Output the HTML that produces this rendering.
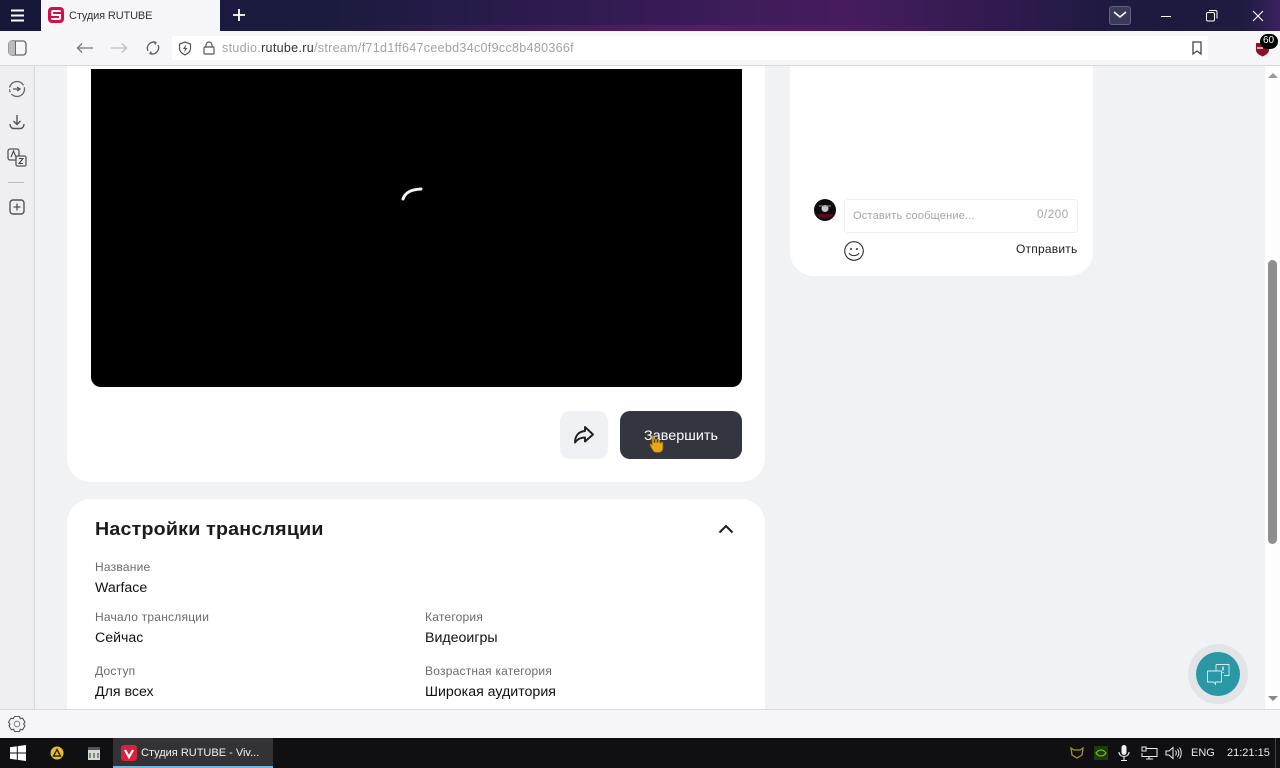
<!DOCTYPE html>
<html lang="ru"><head><meta charset="utf-8"><title>Студия RUTUBE</title>
<style>
html,body{margin:0;padding:0;width:1280px;height:768px;overflow:hidden;background:#f1f2f4;font-family:"Liberation Sans","DejaVu Sans",sans-serif;color:#111}
.a{position:absolute}
.t{position:absolute;white-space:nowrap;line-height:1}
svg{position:absolute;overflow:visible}
.lb{font-size:12px;color:#6a6a6a;letter-spacing:.22px}
.v{font-size:13.5px;color:#111;transform:scaleX(1.05);transform-origin:left center}
</style></head><body>
<div class="a" style="left:0;top:0;width:1280px;height:31px;background:linear-gradient(90deg,#16183a 0%,#1a1b3e 25%,#351b55 50%,#461c5e 66%,#311a50 78%,#1c1a3e 88%,#1e1a40 97%,#3a2260 100%)"></div>
<div class="a" style="left:320px;top:25px;width:640px;height:6px;background:linear-gradient(90deg,rgba(70,30,110,0),rgba(110,30,110,.55) 60%,rgba(70,30,110,0))"></div>
<svg style="left:0;top:0" width="40" height="31"><path d="M11 10.500h13M11 15.500h13M11 20.500h13" stroke="#fff" stroke-width="2"/></svg>
<div class="a" style="left:41px;top:0;width:179px;height:32px;background:#f6f6f8"></div>
<div class="a" style="left:48px;top:7px;width:16px;height:16px;border-radius:4px;background:#d0104c"></div>
<div class="a" style="left:51px;top:10px;width:10px;height:10px;background:#fff;border-radius:2px"></div>
<div class="a" style="left:53px;top:12px;width:8px;height:2px;background:#d0104c"></div>
<div class="a" style="left:51px;top:16px;width:8px;height:2px;background:#d0104c"></div>
<div class="t" style="left:69px;top:11px;font-size:11px;color:#333;letter-spacing:-.13px">Студия RUTUBE</div>
<svg style="left:232px;top:8px" width="14" height="14"><path d="M7 1v12M1 7h12" stroke="#fff" stroke-width="1.800"/></svg>
<div class="a" style="left:1109px;top:6px;width:20px;height:17px;border:1px solid #62627f;border-radius:3px;background:#3a3a5c"></div>
<svg style="left:1112px;top:10px" width="16" height="10"><path d="M2 2l6 5 6-5" fill="none" stroke="#fff" stroke-width="1.500"/></svg>
<div class="a" style="left:1161px;top:16px;width:10px;height:1px;background:#fff"></div>
<svg style="left:1206px;top:10px" width="12" height="12"><rect x=".5" y="2.500" width="8" height="8.500" rx="1.500" fill="none" stroke="#fff"/><path d="M3 .5h6.500a1.500 1.500 0 0 1 1.500 1.500v6.500" fill="none" stroke="#fff"/></svg>
<svg style="left:1252px;top:10px" width="12" height="12"><path d="M1 1l10 10M11 1L1 11" stroke="#fff" stroke-width="1.100"/></svg>

<div class="a" style="left:0;top:31px;width:1280px;height:34px;background:#f6f6f8;border-bottom:1px solid #d8d8da"></div>
<svg style="left:8px;top:40px" width="20" height="16"><rect x="1" y="1" width="17" height="14" rx="3" fill="none" stroke="#666" stroke-width="1.300"/><rect x="1" y="1" width="6" height="14" rx="2" fill="#bbb"/><path d="M7.500 1v14" stroke="#666"/></svg>
<svg style="left:76px;top:42px" width="18" height="12"><path d="M17 6H1.500M6 1.500L1.500 6 6 10.500" fill="none" stroke="#777" stroke-width="1.300"/></svg>
<svg style="left:110px;top:42px" width="18" height="12"><path d="M1 6h15.500M12 1.500L16.500 6 12 10.500" fill="none" stroke="#bdbdbd" stroke-width="1.300"/></svg>
<svg style="left:145px;top:40px" width="16" height="16"><path d="M3 11A6.300 6.300 0 0 1 11 2.500M13 5A6.300 6.300 0 0 1 5 13.500" fill="none" stroke="#666" stroke-width="1.400"/><path d="M8.500 1l3.500 1.300-2 3zM7.500 15L4 13.700l2-3z" fill="#666"/></svg>
<div class="a" style="left:172px;top:36px;width:1036px;height:24px;background:#fff;border-radius:2px"></div>
<svg style="left:178px;top:41px" width="14" height="15"><path d="M7 1l5.500 2v4.500c0 3-2.500 5-5.500 6.500-3-1.500-5.500-3.500-5.500-6.500V3z" fill="none" stroke="#555" stroke-width="1.200"/><path d="M8 3.500L5 8h2l-1 3.500L9.500 7h-2z" fill="#555"/></svg>
<svg style="left:203px;top:41px" width="12" height="14"><rect x="1" y="6" width="10" height="7" rx="1" fill="none" stroke="#555" stroke-width="1.200"/><path d="M3 6V4a3 3 0 0 1 6 0v2" fill="none" stroke="#555" stroke-width="1.200"/></svg>
<div class="t" style="left:222px;top:42px;font-size:12.500px;color:#a2a2a2;letter-spacing:.32px">studio.<span style="color:#333">rutube.ru</span>/stream/f71d1ff647ceebd34c0f9cc8b480366f</div>
<svg style="left:1192px;top:41px" width="10" height="14"><path d="M1 1h8v12L5 10l-4 3z" fill="none" stroke="#444" stroke-width="1.300"/></svg>
<svg style="left:1256px;top:41px" width="14" height="16"><path d="M0 2h13v7c0 3-3 5-6.500 6.500C3 14 0 12 0 9z" fill="#8c1226"/><path d="M1 6h6v2H1z" fill="#e8a0a8"/></svg>
<div class="a" style="left:1260px;top:34px;width:18px;height:15px;border-radius:8px;background:#000"></div>
<div class="t" style="left:1263px;top:36px;font-size:10px;color:#fff">60</div>

<div class="a" style="left:0;top:66px;width:34px;height:644px;background:#efeff1;border-right:1px solid #d8d8da"></div>
<svg style="left:8px;top:80px" width="18" height="18"><circle cx="9" cy="9" r="7.500" fill="none" stroke="#666" stroke-width="1.300" stroke-dasharray="18 2 3 2"/><path d="M5 9h7M9 7l3 2-3 2" fill="none" stroke="#555" stroke-width="1.300"/></svg>
<svg style="left:9px;top:114px" width="16" height="16"><path d="M8 1v9M4.500 7L8 10.500 11.500 7M1 10c0 3 2 4.500 3.500 4.500h7c1.500 0 3.500-1.500 3.500-4.500" fill="none" stroke="#555" stroke-width="1.400"/></svg>
<svg style="left:7px;top:148px" width="20" height="20"><rect x="1" y="1" width="11" height="11" rx="2" fill="none" stroke="#555" stroke-width="1.300"/><rect x="9" y="8" width="10" height="10" rx="1.500" fill="#efeff1" stroke="#555" stroke-width="1.300"/><path d="M4 9l2.500-6L9 9M12 10.500h4l-4 5h4" fill="none" stroke="#444" stroke-width="1.100"/></svg>
<div class="a" style="left:8px;top:182px;width:16px;height:1px;background:#bbb"></div>
<svg style="left:9px;top:199px" width="16" height="16"><rect x="1" y="1" width="14" height="14" rx="3" fill="none" stroke="#555" stroke-width="1.400"/><path d="M8 4.500v7M4.500 8h7" stroke="#555" stroke-width="1.300"/></svg>

<div class="a" style="left:67px;top:66px;width:698px;height:416px;background:#fff;border-radius:0 0 24px 24px"></div>
<div class="a" style="left:91px;top:69px;width:651px;height:318px;background:#000;border-radius:0 0 10px 10px"></div>
<svg style="left:400px;top:186px" width="24" height="16"><path d="M3 13C5 7 10 3.500 21 3" fill="none" stroke="#f4f4f4" stroke-width="3" stroke-linecap="round"/></svg>
<div class="a" style="left:560px;top:411px;width:48px;height:48px;background:#eff0f3;border-radius:10px"></div>
<svg style="left:573px;top:425px" width="22" height="20"><path d="M12 2l8 7.500-8 7v-4c-4 0-7 1-10 5 0-6 3-11 10-11.500z" fill="none" stroke="#1e1e24" stroke-width="1.900" stroke-linejoin="round"/></svg>
<div class="a" style="left:620px;top:411px;width:122px;height:48px;background:#34363f;border-radius:10px"></div>
<div class="t" style="left:644px;top:428px;font-size:14px;color:#fff;transform:scaleX(1.03);transform-origin:left center">Завершить</div>
<svg style="left:648px;top:434px" width="16" height="20"><path d="M4 1.500h2v7h1V5h2v3.500h1V6h2v3h1V8h2v6c0 3-2 4.500-4 4.500H8C6 18.500 5 17 4 15L1.500 10.500 3 9.500 4 11z" fill="#e8a81c" stroke="#6b4a10" stroke-width=".6"/></svg>

<div class="a" style="left:67px;top:499px;width:698px;height:240px;background:#fff;border-radius:24px"></div>
<div class="t" style="left:95px;top:520px;font-size:18px;font-weight:bold;color:#1a1a1f;letter-spacing:.2px;transform:scaleX(1.09);transform-origin:left center">Настройки трансляции</div>
<svg style="left:718px;top:523px" width="16" height="12"><path d="M1.500 9.500L8 3l6.500 6.500" fill="none" stroke="#1a1a1f" stroke-width="2"/></svg>
<div class="t lb" style="left:95px;top:561px">Название</div>
<div class="t v" style="left:95px;top:581px">Warface</div>
<div class="t lb" style="left:95px;top:611px">Начало трансляции</div>
<div class="t v" style="left:95px;top:631px">Сейчас</div>
<div class="t lb" style="left:95px;top:665px">Доступ</div>
<div class="t v" style="left:95px;top:685px">Для всех</div>
<div class="t lb" style="left:425px;top:611px">Категория</div>
<div class="t v" style="left:425px;top:631px">Видеоигры</div>
<div class="t lb" style="left:425px;top:665px">Возрастная категория</div>
<div class="t v" style="left:425px;top:685px">Широкая аудитория</div>

<div class="a" style="left:790px;top:66px;width:303px;height:210px;background:#fff;border-radius:0 0 24px 24px"></div>
<svg style="left:814px;top:199px" width="22" height="22"><circle cx="11" cy="11" r="11" fill="#0c0c0e"/><path d="M2 15a11 11 0 0 0 18 0z" fill="#5a0a18"/><circle cx="11" cy="9.500" r="3.500" fill="#c8c8c8"/><path d="M5 7h12" stroke="#999"/></svg>
<div class="a" style="left:844px;top:199px;width:232px;height:32px;border:1px solid #eeeef0;border-radius:4px;background:#fff"></div>
<div class="t" style="left:853px;top:211px;font-size:11px;color:#a4a4a8;letter-spacing:.2px">Оставить сообщение...</div>
<div class="t" style="left:1037px;top:210px;font-size:11.500px;color:#a4a4a8;letter-spacing:.6px">0/200</div>
<svg style="left:844px;top:241px" width="20" height="20"><circle cx="10" cy="10" r="9.300" fill="none" stroke="#333" stroke-width="1.100"/><circle cx="7" cy="8" r="1" fill="#333"/><circle cx="13" cy="8" r="1" fill="#333"/><path d="M5 12c2 3.500 8 3.500 10 0" fill="none" stroke="#333" stroke-width="1.100"/></svg>
<div class="t" style="left:1016px;top:243px;font-size:12px;color:#1a1a1f;letter-spacing:.22px">Отправить</div>

<div class="a" style="left:1265px;top:66px;width:15px;height:644px;background:#fdfdfd"></div>
<svg style="left:1268px;top:72px" width="10" height="6"><path d="M0 6l5-5 5 5z" fill="#999"/></svg>
<svg style="left:1268px;top:696px" width="10" height="6"><path d="M0 0l5 5 5-5z" fill="#888"/></svg>
<div class="a" style="left:1268px;top:260px;width:9px;height:284px;background:#8e8e8e;border-radius:5px"></div>

<div class="a" style="left:1188px;top:644px;width:60px;height:60px;border-radius:50%;background:#e3e4e7"></div>
<div class="a" style="left:1196px;top:652px;width:44px;height:44px;border-radius:50%;background:#2a98a4"></div>
<svg style="left:1206px;top:663px" width="24" height="22"><path d="M10 1.500h13v11h-5" fill="none" stroke="#d6eef0" stroke-width=".9"/><path d="M10 1.500v6" fill="none" stroke="#d6eef0" stroke-width=".9"/><path d="M1.500 8h14v11h-6v2.500l-2-2.500h-6z" fill="#2a98a4" stroke="#d6eef0" stroke-width=".9"/><path d="M17 3.500v4M17 9v1" stroke="#fff" stroke-width="1.200"/></svg>

<div class="a" style="left:0;top:709px;width:1280px;height:29px;background:#f6f6f8;border-top:1px solid #d8d8da;box-sizing:border-box"></div>
<svg style="left:8px;top:715px" width="18" height="18"><path d="M6.500 1.500h5l.8 2.200 2.300-.5 2.400 4-1.500 1.800 1.500 1.800-2.400 4-2.300-.5-.8 2.200h-5l-.8-2.200-2.300.5-2.400-4L2 9 .5 7.200l2.400-4 2.300.5z" fill="none" stroke="#555" stroke-width="1.100"/><circle cx="9" cy="9" r="2.800" fill="none" stroke="#888" stroke-width="1.100"/></svg>

<div class="a" style="left:0;top:738px;width:1280px;height:30px;background:#101012"></div>
<svg style="left:10px;top:745px" width="16" height="16"><path d="M0 2.300L6.800 1.300V7.500H0zM7.800 1.100L16 0V7.500H7.800zM0 8.500H6.800V14.700L0 13.700zM7.800 8.500H16V16L7.800 14.900z" fill="#fff"/></svg>
<svg style="left:50px;top:746px" width="14" height="14"><circle cx="7" cy="7" r="6.500" fill="#e8c020"/><path d="M7 3.500L10.500 10h-7z" fill="none" stroke="#222" stroke-width="1.400"/></svg>
<svg style="left:87px;top:745px" width="14" height="16"><rect x="1" y="5" width="12" height="10" fill="#d8d8d8"/><path d="M1 2h12v3H1z" fill="#555"/><path d="M3 8v5M7 8v5M11 8v5" stroke="#5a7a5a" stroke-width="1.500"/></svg>
<div class="a" style="left:113px;top:738px;width:160px;height:30px;background:#333336"></div>
<div class="a" style="left:113px;top:766px;width:160px;height:2px;background:#78b4dc"></div>
<div class="a" style="left:121px;top:745px;width:16px;height:16px;border-radius:3px;background:#d8233e"></div>
<svg style="left:121px;top:745px" width="16" height="16"><path d="M4 5l4 7 4-7" fill="none" stroke="#fff" stroke-width="2.200"/></svg>
<div class="t" style="left:141px;top:748px;font-size:11px;color:#f2f2f2">Студия RUTUBE - Viv...</div>

<svg style="left:1070px;top:747px" width="14" height="12"><path d="M1 1l3 2h6l3-2-1 7-5 3-5-3z" fill="none" stroke="#a89030" stroke-width="1.300"/></svg>
<div class="a" style="left:1094px;top:746px;width:14px;height:14px;background:#1c3a14"></div>
<svg style="left:1095px;top:748px" width="12" height="10"><path d="M1 5c3-4 7-4 10 0-3 4-7 4-10 0z" fill="none" stroke="#76b900" stroke-width="1.300"/></svg>
<svg style="left:1118px;top:744px" width="12" height="18"><rect x="3.500" y="1" width="5" height="10" rx="2.500" fill="#f0f0f0"/><path d="M1 8c0 6 10 6 10 0M6 13v3M3 16.500h6" fill="none" stroke="#f0f0f0" stroke-width="1.100"/></svg>
<svg style="left:1141px;top:746px" width="17" height="14"><path d="M5 2.500h11v8H1V7M8 10.500v2.500M5 13h7" fill="none" stroke="#eee"/><rect x="1" y="1" width="4" height="4" fill="none" stroke="#eee"/></svg>
<svg style="left:1165px;top:746px" width="17" height="14"><path d="M1 5h3l4-3.500v11L4 9H1z" fill="none" stroke="#eee"/><path d="M10.500 4.500c1 1.500 1 3.500 0 5M12.500 3c1.700 2.500 1.700 5.500 0 8M14.500 1.500c2.300 3.300 2.300 7.700 0 11" fill="none" stroke="#eee"/></svg>
<div class="t" style="left:1191px;top:748px;font-size:11px;color:#e8e8e8">ENG</div>
<div class="t" style="left:1227px;top:748px;font-size:11px;color:#e8e8e8">21:21:15</div>
<div class="a" style="left:1275px;top:738px;width:1px;height:30px;background:#444"></div>
</body></html>
